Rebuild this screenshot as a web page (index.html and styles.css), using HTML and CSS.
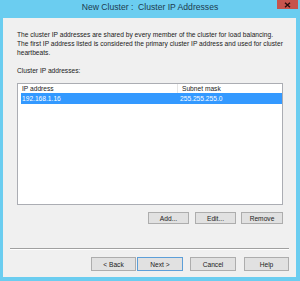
FILE: index.html
```html
<!DOCTYPE html>
<html>
<head>
<meta charset="utf-8">
<link rel="stylesheet" href="styles.css">
</head>
<body>
<div class="window">
  <div class="titlebar">
    <div class="spacer"></div>
    <div class="title">New Cluster :&nbsp; Cluster IP Addresses</div>
    <div class="close"><svg width="7" height="6" viewBox="0 0 7 6"><path d="M1 0.8 L6 5.2 M6 0.8 L1 5.2" stroke="#2a0d0d" stroke-width="1.4"/></svg></div>
  </div>
  <div class="panel">
    <div class="content">
      <p class="desc">The cluster IP addresses are shared by every member of the cluster for load balancing.<br>The first IP address listed is considered the primary cluster IP address and used for cluster<br>heartbeats.</p>
      <p class="label">Cluster IP addresses:</p>
      <div class="listbox">
        <div class="row header">
          <div class="col1">IP address</div>
          <div class="col2">Subnet mask</div>
        </div>
        <div class="row selected">
          <div class="col1">192.168.1.16</div>
          <div class="col2">255.255.255.0</div>
        </div>
      </div>
      <div class="actions">
        <button class="btn add">Add...</button>
        <button class="btn edit">Edit...</button>
        <button class="btn remove">Remove</button>
      </div>
    </div>
    <div class="footer">
      <button class="btn nav back">&lt; Back</button>
      <button class="btn nav next">Next &gt;</button>
      <button class="btn nav cancel">Cancel</button>
      <button class="btn nav help">Help</button>
    </div>
  </div>
</div>
</body>
</html>
```
FILE: styles.css
```css
html, body {
  margin: 0;
  padding: 0;
}
body {
  width: 300px;
  height: 281px;
  background: #6bcdf0;
  font-family: "Liberation Sans", Arial, sans-serif;
  overflow: hidden;
}
.window {
  width: 300px;
  height: 281px;
}
.titlebar {
  height: 18px;
  display: grid;
  grid-template-columns: 1fr auto 1fr;
}
.title {
  font-size: 8.6px;
  line-height: 14px;
  color: #1d3b4e;
  white-space: nowrap;
}
.close {
  justify-self: end;
  align-self: start;
  width: 21px;
  height: 9px;
  margin-right: 2px;
  background: #c7544d;
  display: flex;
  align-items: center;
  justify-content: center;
}
.close svg { display: block; }
.panel {
  margin: 0 4px 0 3px;
  height: 259px;
  background: #f0f0f0;
  box-sizing: border-box;
  display: flex;
  flex-direction: column;
}
.content {
  padding: 12px 13px 0 14px;
}
.desc, .label {
  margin: 0;
  font-size: 6.65px;
  line-height: 9px;
  color: #1a1a1a;
  white-space: nowrap;
}
.label {
  margin-top: 9px;
}
.listbox {
  margin-top: 8px;
  height: 122px;
  box-sizing: border-box;
  border: 1px solid #abadb3;
  background: #ffffff;
}
.row {
  display: flex;
  font-size: 6.65px;
  color: #1a1a1a;
}
.row.header {
  height: 9px;
  line-height: 9px;
}
.col1 {
  width: 155px;
  padding-left: 4px;
}
.header .col1 {
  border-right: 1px solid #e5e5e5;
}
.col2 {
  padding-left: 4px;
}
.row.selected {
  margin: 0 0 0 3px;
  height: 11px;
  line-height: 11px;
  background: #3399ff;
  color: #ffffff;
}
.row.selected .col1 {
  width: 153px;
  padding-left: 1px;
  border-right: 1px solid transparent;
}
.btn {
  box-sizing: border-box;
  margin: 0;
  padding: 0;
  border: 1px solid #adadad;
  background: #e1e1e1;
  font-family: "Liberation Sans", Arial, sans-serif;
  font-size: 6.65px;
  color: #1a1a1a;
}
.actions {
  margin-top: 7px;
  display: flex;
  justify-content: flex-end;
}
.actions .btn {
  height: 12px;
  width: 41px;
}
.actions .edit { margin-left: 6px; }
.actions .remove { margin-left: 5px; width: 42px; }
.footer {
  margin: 24px 7px 0 7px;
  border-top: 1px solid #a0a0a0;
  box-shadow: inset 0 1px 0 #ffffff;
  padding-top: 8px;
  display: flex;
  justify-content: flex-end;
}
.nav {
  height: 14px;
  width: 46px;
}
.nav.back { width: 45px; margin-right: 1px; }
.nav.next { border-color: #5d9fd8; }
.nav.cancel { margin-left: 7px; }
.nav.help { margin-left: 8px; width: 45px; }
```
